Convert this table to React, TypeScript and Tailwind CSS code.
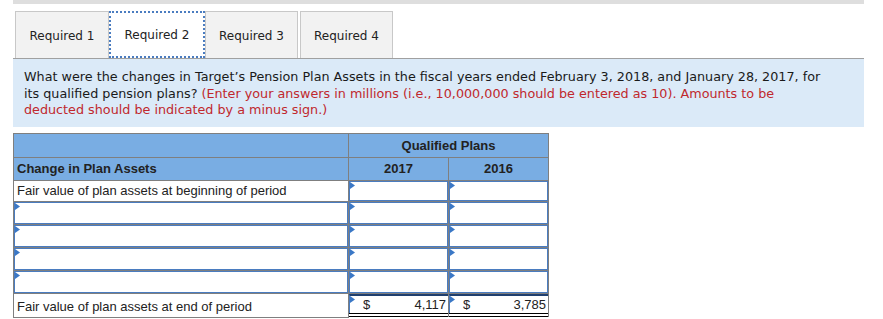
import React from 'react';

const TABS = ['Required 1', 'Required 2', 'Required 3', 'Required 4'];

// small blue marker in the corner of each answer field
const Marker = () => (
  <svg className="absolute left-0 top-0" width="5" height="7" viewBox="0 0 5 7">
    <polygon points="0,0 5,3.5 0,7" fill="#3b78c6" />
  </svg>
);

const InputCell = ({ short = false }: { short?: boolean }) => (
  <td className="border border-[#7f7f7f] p-0">
    <div className={`relative border border-[#4a7cc0] bg-white ${short ? 'h-[20px]' : 'h-[22px]'}`}>
      <Marker />
    </div>
  </td>
);

export default function App() {
  return (
    <div className="w-[883px] h-[319px] bg-white overflow-hidden">
      <div className="ml-[13px] w-[851px]">
        <div className="h-[4px] bg-[#dedede]" />

        {/* tab strip */}
        <div className="mt-[7px] flex items-end border-b border-[#a0a0a0] pl-[2px] font-['DejaVu_Sans',sans-serif] text-[12px] text-[#222]">
          <div className="flex h-[47px] w-[94px] items-center justify-center border border-b-0 border-[#c8c8c8] bg-[#f2f2f2] pt-[1px]">
            {TABS[0]}
          </div>
          <div className="flex h-[47px] w-[96px] items-center justify-center border-2 border-dotted border-[#4a7cc0] bg-white pt-[1px]">
            {TABS[1]}
          </div>
          <div className="flex h-[47px] w-[93px] items-center justify-center border border-b-0 border-[#c8c8c8] bg-[#f2f2f2] pt-[1px]">
            {TABS[2]}
          </div>
          <div className="ml-[2px] flex h-[47px] w-[93px] items-center justify-center border border-b-0 border-[#c8c8c8] bg-[#f2f2f2] pt-[1px]">
            {TABS[3]}
          </div>
        </div>

        {/* question */}
        <div className="h-[68px] bg-[#dbeaf8] pl-[11px] pt-[10px] font-['DejaVu_Sans',sans-serif] text-[12.75px] leading-[16.6px] text-[#1a1a1a]">
          What were the changes in Target’s Pension Plan Assets in the fiscal years ended February 3, 2018, and January 28, 2017, for
          <br />
          its qualified pension plans?{' '}
          <span className="text-[#c0282d]">
            (Enter your answers in millions (i.e., 10,000,000 should be entered as 10). Amounts to be
            <br />
            deducted should be indicated by a minus sign.)
          </span>
        </div>

        {/* plan asset table */}
        <table className="mt-[6px] border-collapse font-['Liberation_Sans',Arial,sans-serif] text-[13px] text-[#222]">
          <colgroup>
            <col className="w-[335px]" />
            <col className="w-[100px]" />
            <col className="w-[100px]" />
          </colgroup>
          <thead>
            <tr className="h-[24px] bg-[#79ade3]">
              <th className="border border-[#7f7f7f]" />
              <th colSpan={2} className="border border-[#7f7f7f] text-center font-bold">
                Qualified Plans
              </th>
            </tr>
            <tr className="h-[23px] bg-[#79ade3]">
              <th className="border border-[#7f7f7f] pl-[3px] text-left font-bold">Change in Plan Assets</th>
              <th className="border border-[#7f7f7f] text-center font-bold">2017</th>
              <th className="border border-[#7f7f7f] text-center font-bold">2016</th>
            </tr>
          </thead>
          <tbody>
            <tr>
              <td className="border border-[#7f7f7f] pl-[3px] leading-[20px]">Fair value of plan assets at beginning of period</td>
              <InputCell short />
              <InputCell short />
            </tr>
            {[0, 1, 2, 3].map((i) => (
              <tr key={i}>
                <InputCell />
                <InputCell />
                <InputCell />
              </tr>
            ))}
            <tr>
              <td className="border border-[#7f7f7f] pl-[3px] pt-[2px]">Fair value of plan assets at end of period</td>
              {['4,117', '3,785'].map((v) => (
                <td key={v} className="border-x border-t border-[#7f7f7f] p-0">
                  <div className="relative flex h-[19px] items-center justify-between border-l border-t-2 border-[#4a7cc0] border-t-[#1f3f6f] pl-[13px] pr-[2px]">
                    <Marker />
                    <span>$</span>
                    <span>{v}</span>
                  </div>
                  <div className="h-[4px] border-y border-black" />
                </td>
              ))}
            </tr>
          </tbody>
        </table>
      </div>
    </div>
  );
}
